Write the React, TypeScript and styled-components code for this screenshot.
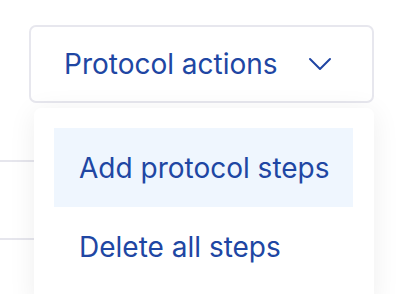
import React from 'react';
import styled, { createGlobalStyle } from 'styled-components';
import { ChevronDown } from 'lucide-react';

const GlobalStyle = createGlobalStyle`
	html, body {
		margin: 0;
		padding: 0;
		background: #ffffff;
	}
	body {
		font-family: Inter, "Noto Sans", sans-serif;
		-webkit-font-smoothing: antialiased;
	}
`;

const Page = styled.div`
	position: relative;
	width: 402px;
	height: 294px;
	overflow: hidden;
`;

const Toolbar = styled.div`
	display: flex;
	padding: 25px 0 0 29px;
`;

const DropdownWrapper = styled.div`
	position: relative;
`;

const TriggerButton = styled.button`
	display: flex;
	align-items: center;
	width: 345px;
	height: 78px;
	padding: 0 0 0 33px;
	gap: 22px;
	border: 2px solid #e7e7ee;
	border-radius: 7px;
	background: #ffffff;
	color: #2046a3;
	font-family: Inter, sans-serif;
	font-size: 28px;
	font-weight: 400;
	cursor: pointer;
	box-sizing: border-box;
`;

const Table = styled.div`
	width: 200px;
	margin-top: 57px;
`;

const TableRow = styled.div`
	height: 76px;
	border-top: 2px solid #e6e6ed;
`;

const Menu = styled.div`
	position: absolute;
	z-index: 10;
	top: calc(100% + 5px);
	left: 5px;
	width: 340px;
	padding: 20px 21px 20px 20px;
	box-sizing: border-box;
	background: #ffffff;
	border-radius: 7px;
	box-shadow: 0 4px 28px rgba(0, 0, 0, 0.07);
	display: flex;
	flex-direction: column;
`;

const MenuItem = styled.div<{ $active?: boolean }>`
	height: 79px;
	display: flex;
	align-items: center;
	padding-left: 25px;
	background: ${(p) => (p.$active ? '#eff6fe' : 'transparent')};
	color: #2046a3;
	font-size: 28px;
`;

const App: React.FC = () => {
	return (
		<Page>
			<GlobalStyle />
			<Toolbar>
				<DropdownWrapper>
					<TriggerButton>
						Protocol actions
						<ChevronDown size={40} strokeWidth={1.2} />
					</TriggerButton>
					<Menu>
						<MenuItem $active>Add protocol steps</MenuItem>
						<MenuItem>Delete all steps</MenuItem>
					</Menu>
				</DropdownWrapper>
			</Toolbar>
			<Table>
				<TableRow />
				<TableRow />
			</Table>
		</Page>
	);
};

export default App;
